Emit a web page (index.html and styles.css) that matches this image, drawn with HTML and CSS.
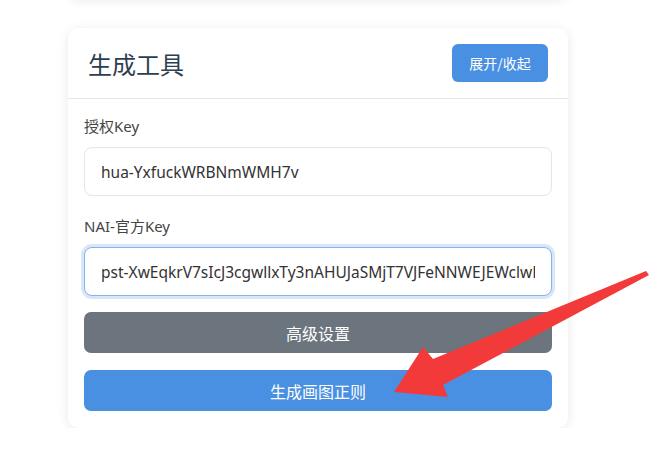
FILE: index.html
```html
<!DOCTYPE html>
<html lang="zh-CN">
<head>
<meta charset="utf-8">
<title>生成工具</title>
<link rel="stylesheet" href="styles.css">
</head>
<body>
<div class="page">
  <div class="card card-prev"></div>
  <section class="card">
    <header class="card-header">
      <h2 class="card-title">生成工具</h2>
      <button class="btn btn-toggle">展开/收起</button>
    </header>
    <div class="card-body">
      <label class="field-label" for="auth">授权Key</label>
      <input id="auth" class="input" type="text" value="hua-YxfuckWRBNmWMH7v">
      <label class="field-label" for="nai">NAI-官方Key</label>
      <input id="nai" class="input input-focus" type="text" value="pst-XwEqkrV7sIcJ3cgwllxTy3nAHUJaSMjT7VJFeNNWEJEWclwF">
      <button class="btn btn-block btn-gray">高级设置</button>
      <button class="btn btn-block btn-blue">生成画图正则</button>
    </div>
  </section>
</div>
<svg class="arrow" width="669" height="469" viewBox="0 0 669 469">
  <polygon points="394,392 423,347 433,359 646,271 649,275 443,385 448,397" fill="#f23a3a"/>
</svg>
</body>
</html>
```
FILE: styles.css
```css
html, body {
  margin: 0;
  padding: 0;
  background: #ffffff;
  font-family: "Noto Sans", "Noto Sans CJK SC", sans-serif;
  color: #333;
}
.page {
  width: 500px;
  padding-left: 68px;
  display: flex;
  flex-direction: column;
  gap: 30px;
}
.card {
  background: #fff;
  border-radius: 10px;
  box-shadow: 0 2px 12px rgba(0,0,0,0.09);
}
.card-prev {
  height: 40px;
  margin-top: -42px;
}
.card-header {
  height: 70px;
  border-bottom: 1px solid #e6e6e6;
  display: flex;
  align-items: center;
  justify-content: space-between;
  padding: 0 20px;
}
.card-title {
  margin: 0;
  font-size: 24px;
  font-weight: 400;
  color: #2c3e50;
  font-family: "Noto Sans CJK SC", sans-serif;
}
.btn {
  border: none;
  color: #fff;
  font-family: "Noto Sans CJK SC", sans-serif;
  cursor: pointer;
}
.btn-toggle {
  width: 96px;
  height: 38px;
  border-radius: 6px;
  background: #4a90e2;
  font-size: 14px;
}
.card-body {
  padding: 16px 16px 17px;
  display: flex;
  flex-direction: column;
}
.field-label {
  font-size: 15px;
  line-height: 22px;
  color: #444;
  margin-bottom: 10px;
}
.input {
  box-sizing: border-box;
  width: 100%;
  height: 49px;
  border: 1px solid #e3e6ea;
  border-radius: 8px;
  padding: 0 16px;
  font-family: "Noto Sans", sans-serif;
  font-size: 15.5px;
  color: #333;
  background: #fff;
  outline: none;
  margin: 0 0 19px;
}
.input-focus {
  border-color: #86b2ea;
  box-shadow: 0 0 0 3px rgba(74,144,226,0.22);
  margin-bottom: 16px;
}
.btn-block {
  width: 100%;
  height: 41px;
  border-radius: 7px;
  font-size: 16px;
}
.btn-gray {
  background: #6c757d;
  margin-bottom: 17px;
}
.btn-blue {
  background: #4a90e2;
}
.arrow {
  position: absolute;
  left: 0;
  top: 0;
  pointer-events: none;
}
```
